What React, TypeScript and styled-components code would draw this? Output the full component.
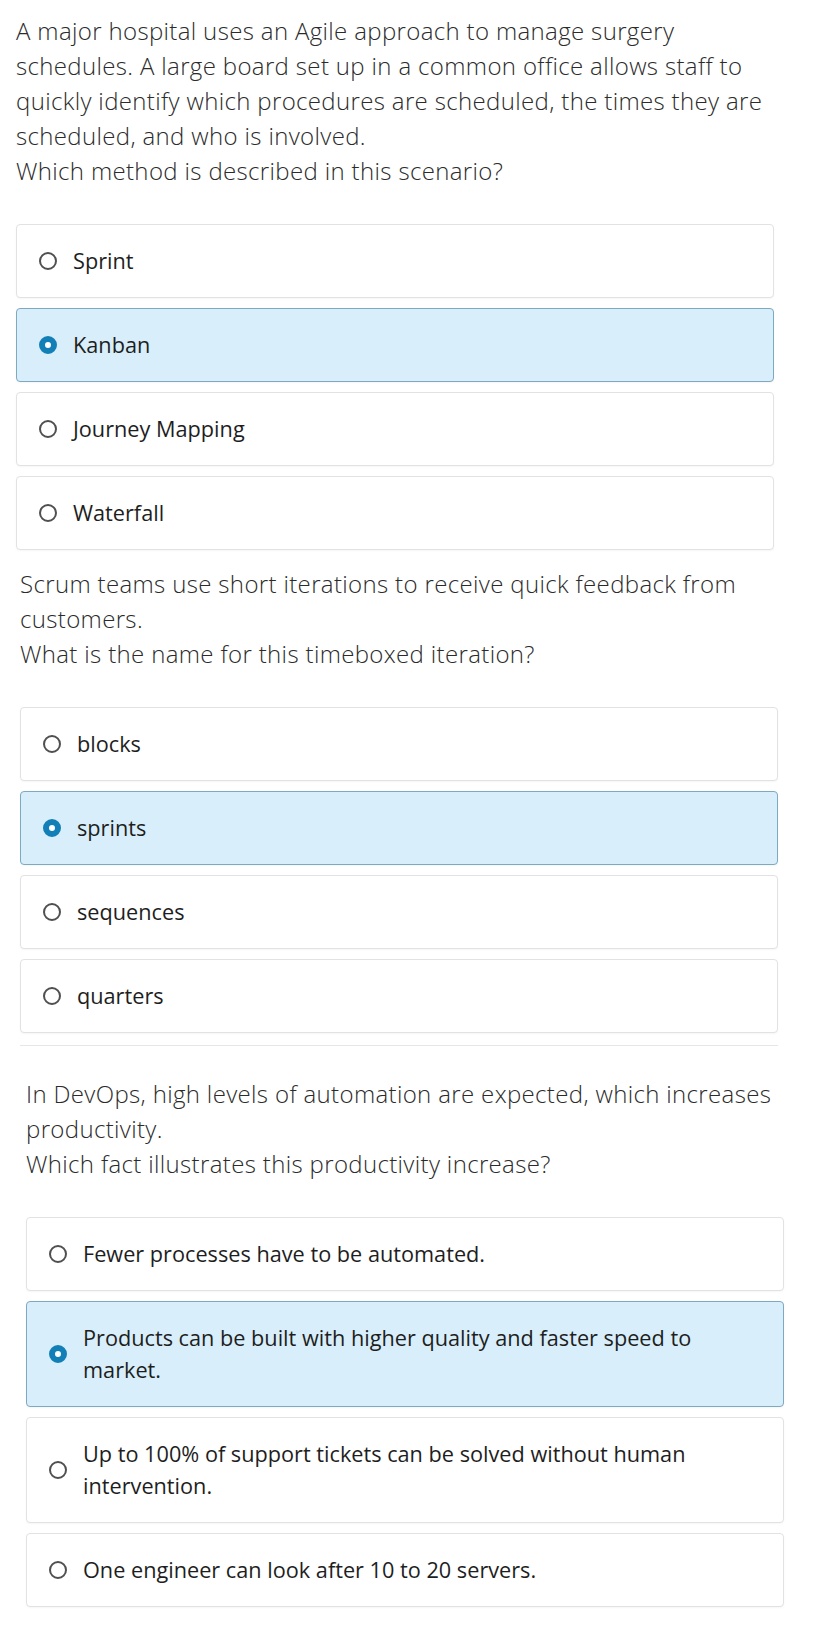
import React, { FunctionComponent } from 'react';
import styled, { createGlobalStyle } from 'styled-components';

const GlobalStyle = createGlobalStyle`
  html, body {
    margin: 0;
    padding: 0;
    background: #ffffff;
  }
  body {
    font-family: 'Open Sans', 'Lato', sans-serif;
  }
`;

const Page = styled.div`
  width: 821px;
  min-height: 1633px;
  display: flex;
  flex-direction: column;
`;

const Section = styled.section<{ $left: number; $top: number; $divider?: boolean }>`
  padding: ${(p) => p.$top}px 0 0 ${(p) => p.$left}px;
  width: 758px;
  ${(p) =>
    p.$divider &&
    `
    &::after {
      content: '';
      display: block;
      margin-top: 12px;
      border-bottom: 1px solid #e6e6e6;
    }
  `}
`;

const Question = styled.div`
  font-family: 'Open Sans', sans-serif;
  font-weight: 300;
  font-size: 24px;
  letter-spacing: 0.35px;
  line-height: 35px;
  color: #2b2b2b;
  margin-bottom: 36px;
  white-space: nowrap;
`;

const Options = styled.div`
  display: flex;
  flex-direction: column;
  gap: 10px;
`;

const Option = styled.label<{ $selected?: boolean }>`
  display: flex;
  align-items: center;
  gap: 16px;
  padding: 20px 60px 20px 22px;
  border: 1px solid ${(p) => (p.$selected ? '#7fa9c0' : '#e2e2e2')};
  border-radius: 4px;
  background-color: ${(p) => (p.$selected ? '#d8effb' : '#ffffff')};
  box-shadow: 0 1px 2px rgba(0, 0, 0, 0.04);
`;

const Radio = styled.span<{ $selected?: boolean }>`
  flex: none;
  box-sizing: border-box;
  width: 18px;
  height: 18px;
  border-radius: 50%;
  background: #ffffff;
  border: ${(p) => (p.$selected ? '6px solid #137fb7' : '2.5px solid #505050')};
`;

const OptionText = styled.span`
  font-family: 'Open Sans', sans-serif;
  font-size: 21.7px;
  line-height: 32px;
  color: #1e1e1e;
`;

interface QuizProps {
  left: number;
  top: number;
  divider?: boolean;
  question: string[];
  options: string[];
  selected: number;
}

const Quiz: FunctionComponent<QuizProps> = ({ left, top, divider, question, options, selected }) => (
  <Section $left={left} $top={top} $divider={divider}>
    <Question>
      {question.map((line, i) => (
        <div key={i}>{line}</div>
      ))}
    </Question>
    <Options>
      {options.map((opt, i) => (
        <Option key={opt} $selected={i === selected}>
          <Radio $selected={i === selected} />
          <OptionText>{opt}</OptionText>
        </Option>
      ))}
    </Options>
  </Section>
);

const App: FunctionComponent = () => (
  <Page>
    <GlobalStyle />
    <Quiz
      left={16}
      top={13}
      question={[
        'A major hospital uses an Agile approach to manage surgery',
        'schedules. A large board set up in a common office allows staff to',
        'quickly identify which procedures are scheduled, the times they are',
        'scheduled, and who is involved.',
        'Which method is described in this scenario?',
      ]}
      options={['Sprint', 'Kanban', 'Journey Mapping', 'Waterfall']}
      selected={1}
    />
    <Quiz
      left={20}
      top={16}
      divider
      question={[
        'Scrum teams use short iterations to receive quick feedback from',
        'customers.',
        'What is the name for this timeboxed iteration?',
      ]}
      options={['blocks', 'sprints', 'sequences', 'quarters']}
      selected={1}
    />
    <Quiz
      left={26}
      top={30}
      question={[
        'In DevOps, high levels of automation are expected, which increases',
        'productivity.',
        'Which fact illustrates this productivity increase?',
      ]}
      options={[
        'Fewer processes have to be automated.',
        'Products can be built with higher quality and faster speed to market.',
        'Up to 100% of support tickets can be solved without human intervention.',
        'One engineer can look after 10 to 20 servers.',
      ]}
      selected={1}
    />
  </Page>
);

export default App;
